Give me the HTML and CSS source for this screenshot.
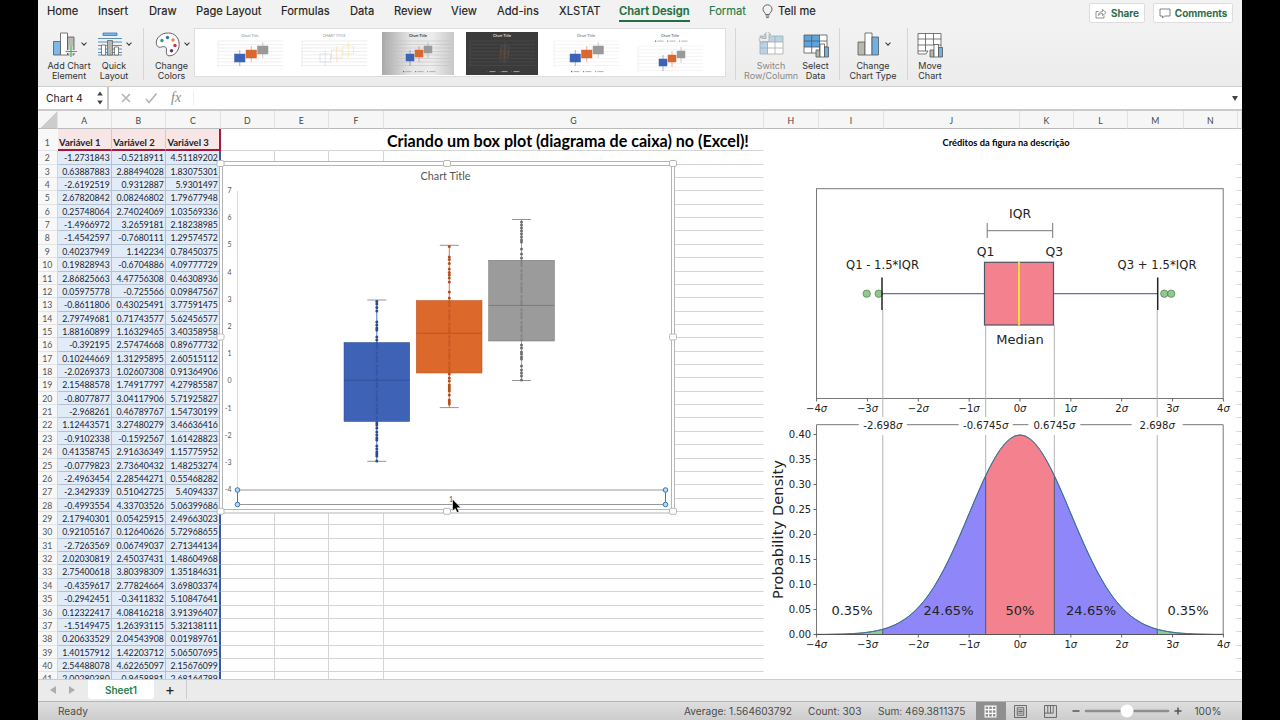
FILE: index.html
```
<!DOCTYPE html>
<html lang="pt-BR">
<head>
    <meta charset="UTF-8">
    <meta name="viewport" content="width=device-width, initial-scale=1.0">
    <title>Box plot - Excel</title>
    <link rel="stylesheet" href="styles.css">
</head>
<body>
<div class="app">
    <!-- ribbon tabs -->
    <div class="tabs">
        <span>Home</span><span>Insert</span><span>Draw</span><span>Page Layout</span><span>Formulas</span><span>Data</span><span>Review</span><span>View</span><span>Add-ins</span><span>XLSTAT</span><span class="active">Chart Design</span><span class="green">Format</span>
        <svg class="bulb" width="11" height="15" viewBox="0 0 11 15"><path d="M3.6 10.5C3.6 8.6 1 8 1 5.2a4.5 4.4 0 0 1 9 0C10 8 7.4 8.6 7.4 10.500zM3.700 12h3.600M4.200 13.600h2.600" fill="none" stroke="#555" stroke-width=".9"/></svg>
        <span>Tell me</span>
        <button class="share"><svg width="12" height="11" viewBox="0 0 12 11"><path d="M3.500 3.500H1v6.500h8V7.500M3.500 7.500C3.500 4.700 5.500 3.600 7.500 3.600V1.400L11 4.600 7.500 7.500V5.500C5.800 5.500 4.500 6 3.500 7.500z" fill="none" stroke="#666" stroke-width=".7"/></svg>Share</button>
        <button class="comments"><svg width="12" height="11" viewBox="0 0 12 11"><path d="M1 1h10v7H5.500L3.500 10V8H1z" fill="none" stroke="#666" stroke-width=".8"/></svg>Comments</button>
    </div>

    <!-- ribbon tools -->
    <div class="ribbon">
        <div class="tool add">
            <div class="icon"><svg width="26" height="26" viewBox="0 0 26 26"><g stroke="#555" stroke-width=".8"><path d="M1.500 9.500h7V23h-7z" fill="#7db9e6"/><path d="M8.500 1h7v22h-7z" fill="#fff"/><path d="M15.500 5h6.500v18h-6.500z" fill="#b9b9b4"/></g><path d="M19 14v11M13.500 19.500h11.500" stroke="#efefef" stroke-width="3"/><path d="M19 14v11M13.500 19.500h11.500" stroke="#3eae54" stroke-width="1.200"/></svg><i class="chev"></i></div>
            Add Chart<br>Element
        </div>
        <div class="tool quick">
            <div class="icon"><svg width="26" height="26" viewBox="0 0 26 26"><path d="M6 1h14v2.500H6z" fill="#7db9e6" stroke="#3a78ad" stroke-width=".8"/><path d="M1 6.500h24M1 10h24M1 13.500h24M1 17h24M1 20.500h24M1 23h24" stroke="#4588b8" stroke-width=".9"/><g stroke="#666" stroke-width=".8"><path d="M4.500 13h4v10h-4zM17.500 15h4v8h-4z" fill="#fff"/><path d="M10.500 8.500h5V23h-5z" fill="#b5b5b0"/></g></svg><i class="chev"></i></div>
            Quick<br>Layout
        </div>
        <div class="sep"></div>
        <div class="tool colors">
            <div class="icon"><svg width="26" height="26" viewBox="0 0 26 26"><path d="M13.500 1C6 .8 1 6 1.300 11c.2 3.800 3 4.800 5.200 4 2.400-.9 5.300-.5 5 3-.2 2.600-.4 5.500 2.500 5.800 5.200.4 10.200-4.800 10.200-11.400C24.200 5.500 19.500 1.100 13.500 1z" fill="#fff" stroke="#555" stroke-width=".9"/><circle cx="7" cy="8.500" r="1.700" fill="#2b9c8c"/><circle cx="12.500" cy="5.500" r="1.700" fill="#3f6fa8"/><circle cx="18" cy="8" r="1.700" fill="#e38a3b"/><circle cx="20" cy="13.500" r="1.700" fill="#c8344c"/><circle cx="16.500" cy="18.800" r="1.700" fill="#6b2d6f"/></svg><i class="chev"></i></div>
            Change<br>Colors
        </div>
        <div class="gallery" id="gallery"></div>
        <div class="sep"></div>
        <div class="tool switch">
            <div class="icon"><svg width="26" height="26" viewBox="0 0 26 26"><path d="M2 4h23v18H2z" fill="#fff"/><path d="M2 4h23v6H2zM2 10h8v12H2z" fill="#b8d4ea"/><path d="M2 4h23v18H2zM2 10h23M2 16h23M9.500 4v18M17 4v18" fill="none" stroke="#aaa" stroke-width=".8"/><path d="M1 7.500l3-3v2h4v-4H6l3.500-3 3.500 3h-2v7H4v2z" fill="#eee" stroke="#aaa" stroke-width=".8"/></svg></div>
            Switch<br>Row/Column
        </div>
        <div class="tool select">
            <div class="icon"><svg width="26" height="26" viewBox="0 0 26 26"><path d="M1 3h23v18H1z" fill="#fff"/><path d="M1 3h15.500v12H1z" fill="#5ba5de"/><path d="M1 3h23v18H1zM1 9h23M1 15h23M8.700 3v18M16.500 3v18" fill="none" stroke="#555" stroke-width=".8"/><g stroke="#555" stroke-width=".8"><path d="M13 18h4v7h-4z" fill="#b5b5b0"/><path d="M17 12h4.500v13H17z" fill="#fff"/><path d="M21.500 15h4v10h-4z" fill="#6fb1e2"/></g></svg></div>
            Select<br>Data
        </div>
        <div class="sep"></div>
        <div class="tool type">
            <div class="icon"><svg width="26" height="26" viewBox="0 0 26 26"><g stroke="#555" stroke-width=".8"><path d="M2 10h7v13H2z" fill="#b9b9b0"/><path d="M9 1h7v22H9z" fill="#fff"/><path d="M16 5h6.500v18H16z" fill="#6fb1e2"/></g></svg><i class="chev"></i></div>
            Change<br>Chart Type
        </div>
        <div class="sep"></div>
        <div class="tool move">
            <div class="icon"><svg width="26" height="26" viewBox="0 0 26 26"><path d="M1 1.500h23V19H14l-2 3.500H1z" fill="#fff"/><path d="M24 15V1.500H1v20.500h8l2-3H1M1 7h23M1 13h23M8.500 1.500V19M16.500 1.500V13" fill="none" stroke="#555" stroke-width=".8"/><g stroke="#555" stroke-width=".8"><path d="M13 18h4v7h-4z" fill="#b5b5b0"/><path d="M17 12.500h4.500V25H17z" fill="#fff"/><path d="M21.500 15.500h4V25h-4z" fill="#6fb1e2"/></g></svg></div>
            Move<br>Chart
        </div>
    </div>

    <!-- formula bar -->
    <div class="formula">
        <div class="name-box">Chart 4
            <svg width="6" height="14" viewBox="0 0 6 14"><path d="M3 .5L5.800 4.500H.2zM3 13.500L.2 9.500h5.600z" fill="#444"/></svg>
        </div>
        <svg class="fx-icons" width="44" height="16" viewBox="0 0 44 16"><path d="M5 4l8 8M13 4l-8 8M29 9l3 3.500 7.500-9" fill="none" stroke="#b4b4b4" stroke-width="1.600"/></svg>
        <span class="fx">fx</span>
        <div class="formula-input"></div>
        <i class="tri"></i>
    </div>

    <!-- worksheet -->
    <div class="sheet">
        <div class="row head"><div class="corner"></div><div>A</div><div>B</div><div>C</div><div>D</div><div>E</div><div>F</div><div>G</div><div>H</div><div>I</div><div>J</div><div>K</div><div>L</div><div>M</div><div>N</div><div></div></div>
        <div id="rows"></div>

        <div class="figure">
            <div class="credits">Créditos da figura na descrição</div>
            <svg id="figure" width="472" height="527" viewBox="764 152 472 527"></svg>
        </div>
        <svg class="chart" id="chart" width="462" height="360" viewBox="216 158 462 360"></svg>
    </div>

    <!-- sheet tabs -->
    <div class="sheet-tabs">
        <svg width="28" height="10" viewBox="0 0 28 10"><path d="M6 1v8L0 5zM19 1v8l6-4z" fill="#adadad"/></svg>
        <div class="sheet-tab">Sheet1</div>
        <div class="plus">+</div>
    </div>

    <div class="status">
        <span class="ready">Ready</span>
        <span class="avg">Average: 1.564603792</span>
        <span class="count">Count: 303</span>
        <span class="sum">Sum: 469.3811375</span>
        <div class="view on"><svg width="13" height="13" viewBox="0 0 12 12"><path d="M1 1h10v10H1zM1 4.300h10M1 7.700h10M4.300 1v10M7.700 1v10" fill="none" stroke="#fff"/></svg></div>
        <div class="view"><svg width="13" height="13" viewBox="0 0 12 12"><path d="M.5.5h11v11H.5zM3 2.500h6v7H3zM4 4.500h4M4 6h4M4 7.500h4" fill="none" stroke="#666" stroke-width=".9"/></svg></div>
        <div class="view"><svg width="13" height="13" viewBox="0 0 12 12"><path d="M.5.5h11v11H.5zM3.500.5v7h5v-7M6 .5v7M.5 7.500h3" fill="none" stroke="#666" stroke-width=".9"/></svg></div>
        <svg class="zoom" width="112" height="14" viewBox="0 0 112 14"><path d="M1.500 7h7M103.500 7h7M107 3.500v7" stroke="#555" stroke-width="1.500"/><path d="M15 7h82" stroke="#8e8e8e" stroke-width="2.500" stroke-linecap="round"/><circle cx="56" cy="7" r="6.500" fill="#fff"/></svg>
        <span class="pct">100%</span>
    </div>
</div>

<script>
    const data = `-1.2731843 -0.5218911 4.51189202
0.63887883 2.88494028 1.83075301
-2.6192519 0.9312887 5.9301497
2.67820842 0.08246802 1.79677948
0.25748064 2.74024069 1.03569336
-1.4966972 3.2659181 2.18238985
-1.4542597 -0.7680111 1.29574572
0.40237949 1.142234 0.78450375
0.19828943 -0.6704886 4.09777729
2.86825663 4.47756308 0.46308936
0.05975778 -0.725566 0.09847567
-0.8611806 0.43025491 3.77591475
2.79749681 0.71743577 5.62456577
1.88160899 1.16329465 3.40358958
-0.392195 2.57474668 0.89677732
0.10244669 1.31295895 2.60515112
-2.0269373 1.02607308 0.91364906
2.15488578 1.74917797 4.27985587
-0.8077877 3.04117906 5.71925827
-2.968261 0.46789767 1.54730199
1.12443571 3.27480279 3.46636416
-0.9102338 -0.1592567 1.61428823
0.41358745 2.91636349 1.15775952
-0.0779823 2.73640432 1.48253274
-2.4963454 2.28544271 0.55468282
-2.3429339 0.51042725 5.4094337
-0.4993554 4.33703526 5.06399686
2.17940301 0.05425915 2.49663023
0.92105167 0.12640626 5.72968655
-2.7263569 0.06749037 2.71344134
2.02030819 2.45037431 1.48604968
2.75400618 3.80398309 1.35184631
-0.4359617 2.77824664 3.69803374
-0.2942451 -0.3411832 5.10847641
0.12322417 4.08416218 3.91396407
-1.5149475 1.26393115 5.32138111
0.20633529 2.04543908 0.01989761
1.40157912 1.42203712 5.06507695
2.54488078 4.62265097 2.15676099
2.00280380 -0.9458881 2.68164789`.split('\n').map(r => r.split(' '));

    // sheet rows
    const empty = '<div></div>'.repeat(12);
    let html = '<div class="row first"><div class="num">1</div><div class="var">Variável 1</div><div class="var">Variável 2</div><div class="var">Variável 3</div><div></div><div></div><div></div><div class="title">Criando um box plot (diagrama de caixa) no (Excel)!</div></div>';
    data.forEach((r, i) => {
        html += `<div class="row"><div class="num">${i + 2}</div>` + r.map(v => `<div class="val">${v}</div>`).join('') + empty + '</div>';
    });
    document.getElementById('rows').innerHTML = html;

    // style gallery thumbnails
    const thumbs = [
        ['#fff', '#e3e3e3', '#888', 0], ['#fff', '#dedede', '#999', 1], ['url(#silver)', '#bdbdbd', '#333', 0],
        ['#3b3b3b', '#505050', '#ddd', 2], ['#fff', '#e8e8e8', '#888', 0], ['#fff', '#e8e8e8', '#777', 3]
    ];
    document.getElementById('gallery').innerHTML = thumbs.map(([bg, grid, ink, kind], i) => {
        let s = `<svg width="72" height="43" viewBox="0 0 72 43"><defs><linearGradient id="silver"><stop offset="0" stop-color="#a8a8a8"/><stop offset=".4" stop-color="#e6e6e6"/><stop offset=".7" stop-color="#ececec"/><stop offset="1" stop-color="#c8c8c8"/></linearGradient></defs><rect width="72" height="43" fill="${bg}"/>`;
        s += `<text x="36" y="4.500" font-size="3.800" fill="${ink}" text-anchor="middle"${i > 1 ? ' font-weight="bold"' : ''}>${i == 1 ? 'CHART TITLE' : 'Chart Title'}</text>`;
        const top = kind == 3 ? 14 : 9;
        for (let y = top; y < 36 + (kind == 3 ? 4 : 0); y += 3.5) s += `<path d="M4 ${y}h65" stroke="${grid}" stroke-width=".5"/>`;
        s += `<path d="M4 ${top}v26" stroke="${grid}" stroke-width=".6"/>`;
        const dy = kind == 3 ? 5 : 0, c = kind == 1 ? ['#c3cbe0', '#f2cf9f', '#ecdd90'] : kind == 2 ? ['#44505c', '#744b35', '#5a5a5a'] : ['#3e62b4', '#d9672f', '#999'];
        const left = [20.5, 22, 24, 34, 20, 25][i], step = [11.5, 11.5, 9, 0.5, 11.5, 9][i], bw = step < 10 ? 8 : 10.5;
        [22, 18, 14].forEach((y, k) => {
            const x = left + step * k;
            s += `<path d="M${x + bw / 2} ${y - 4 + dy}v16" stroke="${c[k]}" stroke-width=".5"/><rect x="${x}" y="${y + dy}" width="${bw}" height="${bw < 10 ? 7 : 8}" fill="${kind == 1 || kind == 2 ? 'none' : c[k]}" stroke="${c[k]}" stroke-width=".5"/>`;
        });
        if (i > 1) {
            const ly = kind == 3 ? 8.5 : 39;
            [21, 33, 45].forEach((x, k) => s += `<rect x="${x}" y="${ly}" width="1.200" height="1.200" fill="${c[k]}"/><path d="M${x + 2.5} ${ly + .6}h6" stroke="#aaa" stroke-width=".9"/>`);
        }
        return s + '</svg>';
    }).join('');

    // excel box plot
    const line = (x1, y1, x2, y2, c, w = 1) => `<line x1="${x1}" y1="${y1}" x2="${x2}" y2="${y2}" stroke="${c}" stroke-width="${w}"/>`;
    const rect = (x, y, w, h, rest) => `<rect x="${x}" y="${y}" width="${w}" height="${h}" ${rest}/>`;
    let c = rect(219.5, 161.5, 455, 351.5, 'fill="#fff" stroke="#b5b5b5"') + rect(222.5, 165.5, 449, 344, 'fill="#fff" stroke="#b5b5b5"');
    c += '<text class="chart-title" x="445.500" y="180">Chart Title</text>' + line(237.5, 191, 237.5, 490, '#dcdcdc');
    for (let v = 7; v >= -4; v--) c += `<text class="axis" x="231.500" y="${193 + (7 - v) * 27.2}">${v}</text>`;
    const boxes = [
        {x: 344, cx: 376.8, q3: 342.5, q1: 421.5, med: 380.2, hi: 300, lo: 461.3, fill: '#3e63b6', dark: '#2b4a8c',
         dots: [301.5, 304, 307.5, 311, 322, 325, 328, 330, 337, 340, 423, 425, 428, 432, 435, 438, 440, 446, 449, 452, 454, 456, 461]},
        {x: 416.3, cx: 449.3, q3: 300.5, q1: 373, med: 333.3, hi: 245.3, lo: 407.6, fill: '#dc682c', dark: '#b54d18',
         dots: [246.5, 257, 259.5, 263.500, 269, 272.5, 275, 278, 282, 292, 298, 374, 378, 381, 385, 387, 389, 391, 395, 400, 402, 404]},
        {x: 488.7, cx: 521.5, q3: 260.3, q1: 341, med: 305.4, hi: 219.5, lo: 380.5, fill: '#9b9b9b', dark: '#6e6e6e',
         dots: [222, 225, 228, 231, 234, 237, 240, 242, 249, 254, 258, 345, 348, 352, 354, 357, 359, 366, 370, 373, 376, 380]}
    ];
    for (const b of boxes) {
        c += line(b.cx, b.hi, b.cx, b.lo, b.fill, .9) + line(b.cx - 9.5, b.hi, b.cx + 9.5, b.hi, '#888', .9) + line(b.cx - 9.5, b.lo, b.cx + 9.5, b.lo, '#888', .9);
        c += rect(b.x, b.q3, 65.7, b.q1 - b.q3, `fill="${b.fill}" stroke="${b.dark}" stroke-width=".5"`);
        c += line(b.x, b.med, b.x + 65.7, b.med, b.dark, .7);
        c += `<line x1="${b.cx}" y1="${b.q3}" x2="${b.cx}" y2="${b.q1}" stroke="${b.dark}" stroke-width="2" stroke-dasharray="7 2 3 1" opacity=".5"/>`;
        c += b.dots.map(y => `<circle cx="${b.cx}" cy="${y}" r="1.500" fill="${b.dark}"/>`).join('');
    }
    c += rect(237.5, 490, 428, 14.5, 'fill="none" stroke="#999"') + '<text class="axis" x="453" y="502">1</text>';
    for (const x of [237.5, 665.5]) c += line(x, 490, x, 504.5, '#3b7db8') + [490, 504.5].map(y => `<circle cx="${x}" cy="${y}" r="2.300" fill="#b7d8f0" stroke="#2f7cba"/>`).join('');
    for (const [x, y] of [[220.5, 163.5], [447, 163.5], [673, 163.5], [220.5, 337], [673, 337], [220.5, 511.3], [447, 511.3], [673, 511.3]])
        c += rect(x - 3.5, y - 3, 7, 6, 'rx="1.500" fill="#fff" stroke="#b0b0b0" stroke-width=".9"');
    c += '<path d="M452.500 499v12l2.700-2.400 1.800 4 2-.9-1.800-3.900h3.600z" fill="#000" stroke="#fff" stroke-width=".6"/>';
    document.getElementById('chart').innerHTML = c;

    // box plot against the normal distribution
    const X = s => 1020 + s * 50.85;
    const Y = s => 634.5 - 500 * Math.exp(-s * s / 2) / Math.sqrt(2 * Math.PI);
    const curve = (a, b) => {
        let p = [];
        for (let i = 0; i <= 80; i++) { const s = a + (b - a) * i / 80; p.push(X(s).toFixed(1) + ',' + Y(s).toFixed(1)); }
        return p.join(' ');
    };
    const area = (a, b, col) => `<polygon points="${X(a)},634.500 ${curve(a, b)} ${X(b)},634.500" fill="${col}" stroke="#33566b" stroke-width=".7"/>`;
    const text = (x, y, t, size, len) => `<text x="${x}" y="${y}" font-size="${size}" text-anchor="middle"${len ? ` textLength="${len}"` : ''}>${t}</text>`;
    const sig = '<tspan font-style="italic">σ</tspan>';
    const q = .6745, w = 2.698;
    let f = rect(816.5, 188.7, 406.7, 209.8, 'fill="none" stroke="#777"');
    f += '<path d="M816.500 634.500V424.700H1223.200V634.500" fill="none" stroke="#777"/>';
    for (const s of [-w, -q, q, w]) f += line(X(s), Math.abs(s) > 1 ? 310 : 325, X(s), 417, '#aaa', .9) + line(X(s), 435, X(s), 634, '#aaa', .9);
    f += area(-4, -w, '#8fca94') + area(w, 4, '#8fca94') + area(-w, -q, '#8f86fa') + area(q, w, '#8f86fa') + area(-q, q, '#f3828e');
    f += `<polyline points="${curve(-4, 4)}" fill="none" stroke="#39729b"/>` + line(816.5, 634.5, 1223.2, 634.5, '#555');
    for (const [s, t, bw] of [[-w, '-2.698', 48], [-q, '-0.6745', 54], [q, '0.6745', 52], [w, '2.698', 51]])
        f += rect(X(s) - bw / 2, 418, bw, 15, 'fill="#fff"') + text(X(s), 429.2, t + sig, 10.1);
    for (let s = -4; s <= 4; s++) {
        f += line(X(s), 398.5, X(s), 401.5, '#555', .9) + line(X(s), 634.5, X(s), 637.500, '#555', .9);
        const t = (s < 0 ? '−' : '') + Math.abs(s) + sig;
        f += text(X(s), 411.7, t, 10) + text(X(s), 647.8, t, 10);
    }
    for (let i = 0; i <= 8; i++) f += line(813.5, 634.5 - i * 25, 816.5, 634.5 - i * 25, '#555', .9) + text(800, 638.2 - i * 25, (i * .05).toFixed(2), 10);
    f += '<text class="ylabel" transform="translate(782.500 529.500) rotate(-90)" text-anchor="middle" font-size="14.600" textLength="139">Probability Density</text>';
    f += text(1020, 217.8, 'IQR', 12.4) + text(985.5, 255.800, 'Q1', 12.4) + text(1054.300, 255.800, 'Q3', 12.4) + text(882.5, 268.600, 'Q1 - 1.5*IQR', 11.6, 73) + text(1157, 268.600, 'Q3 + 1.5*IQR', 11.6, 79) + text(1020, 344, 'Median', 13);
    f += text(852, 614.500, '0.35%', 13, 41) + text(948.5, 614.500, '24.65%', 13, 50) + text(1020, 614.500, '50%', 13) + text(1091, 614.500, '24.65%', 13, 50) + text(1188, 614.500, '0.35%', 13, 41);
    f += '<path d="M987.200 223v15M1052.700 223v15M987.200 230.700h65.500" stroke="#777" fill="none"/>';
    f += line(882, 293.7, 985, 293.7, '#6a69c0', 1.2) + line(1054, 293.7, 1157, 293.7, '#6a69c0', 1.2);
    f += rect(984.5, 262.3, 69, 62.7, 'fill="#f3828e" stroke="#4b5568" stroke-width="1.200"') + line(1019, 262, 1019, 325.5, '#f3dc3c', 2);
    f += [866.7, 878.7, 1164.3, 1171.2].map(x => `<circle cx="${x}" cy="293.700" r="3.700" fill="#6cb56a" fill-opacity=".75" stroke="#4e7d4e" stroke-width=".7"/>`).join('');
    f += line(882, 277.5, 882, 310, '#222', 1.5) + line(1157.7, 277.5, 1157.7, 310, '#222', 1.5);
    document.getElementById('figure').innerHTML = f;
</script>
</body>
</html>
```
FILE: styles.css
```
* {
    box-sizing: border-box;
}
body {
    margin: 0;
    padding: 0 38px;
    height: 720px;
    overflow: hidden;
    background: #000;
    font-family: Inter, sans-serif;
    color: #222;
}
.app {
    width: 1204px;
    height: 720px;
    display: flex;
    flex-direction: column;
    background: #fff;
    overflow: hidden;
}
/* ribbon */
.tabs {
    flex: none;
    height: 26px;
    display: grid;
    grid-template-columns: 51px 51px 47px 85px 69px 44px 57px 46px 62px 60px 90px 53px 16px 311px 85px 80px;
    padding-left: 9px;
    background: #f2f2f2;
    font-size: 11.2px;
    line-height: 23px;
    white-space: nowrap;
    -webkit-text-stroke: .15px;
}
.tabs .green {
    color: #2b7a45;
}
.tabs .active {
    color: #1f7040;
    font-weight: 600;
    justify-self: start;
    height: 22px;
    border-bottom: 2px solid #1f7040;
}
.bulb {
    margin-top: 4px;
}
.tabs button {
    height: 20px;
    margin-top: 3px;
    padding: 0;
    display: flex;
    align-items: center;
    justify-content: center;
    gap: 4px;
    font: 600 10px Inter, sans-serif;
    color: #27693f;
    background: #fff;
    border: 1px solid #ddd;
    border-radius: 2px;
}
.share {
    width: 56px;
}
.tabs .comments {
    width: 80px;
    margin-left: -21px;
}
.ribbon {
    flex: none;
    height: 61px;
    display: flex;
    padding: 2px 0 0 8px;
    background: linear-gradient(#f2f2f2, #ececec);
    border-bottom: 1px solid #cfcfcf;
}
.tool {
    flex: none;
    padding-top: 4px;
    font-size: 9px;
    line-height: 10px;
    text-align: center;
    white-space: nowrap;
    color: #333;
}
.icon {
    height: 29px;
    display: flex;
    justify-content: center;
    gap: 4px;
}
.chev {
    width: 4px;
    height: 4px;
    margin-top: 9px;
    border: solid #333;
    border-width: 0 1px 1px 0;
    transform: rotate(45deg);
}
.add { width: 46px; }
.quick { width: 44px; }
.colors { width: 41px; margin-left: 7px; }
.switch { width: 54px; margin-left: 8px; color: #888; }
.select { width: 35px; }
.type { width: 52px; margin-left: 7px; }
.move { width: 36px; margin-left: 4px; }
.sep {
    flex: none;
    width: 1px;
    height: 52px;
    background: #d6d6d6;
}
.quick + .sep { margin-left: 7px; }
.gallery + .sep { margin-left: 9px; }
.select + .sep { margin-left: 6px; }
.type + .sep { margin-left: 8px; }
.gallery {
    flex: none;
    width: 532px;
    height: 49px;
    margin-left: 2px;
    padding: 3px 0 0 19px;
    display: flex;
    gap: 12px;
    background: #fff;
    border: 1px solid #dedede;
}
.gallery svg {
    flex: none;
}
.gallery text {
    font-family: Lato, sans-serif;
}
/* formula bar */
.formula {
    flex: none;
    height: 24px;
    display: flex;
    align-items: center;
    border-bottom: 2px solid #cbcbcb;
}
.name-box {
    width: 71px;
    height: 22px;
    display: flex;
    align-items: center;
    justify-content: space-between;
    padding: 0 4px 0 8px;
    font-size: 10.400px;
    border-right: 2px solid #c8c8c8;
}
.fx-icons {
    margin-left: 8px;
}
.fx {
    width: 22px;
    margin-left: 10px;
    font: italic 14px "Liberation Serif", serif;
    color: #8a8a8a;
}
.formula-input {
    flex: 1;
    height: 14px;
    border-left: 1px solid #eee;
}
.tri {
    margin-right: 4px;
    border: 3px solid transparent;
    border-top: 5px solid #444;
    border-bottom: 0;
}
/* worksheet */
.sheet {
    flex: none;
    position: relative;
    height: 568px;
    overflow: hidden;
    font-family: Lato, sans-serif;
}
.row {
    display: grid;
    grid-template-columns: 19.500px 54.200px 54.200px 55px 54px 54px 55px 380px 55px 65px 136px 54px 54px 56px 54px 4px;
    grid-template-rows: 100%;
    height: 13.37px;
    font-size: 8.700px;
    line-height: 14px;
}
.row > div {
    border-right: 1px solid #d4d4d4;
    border-bottom: 1px solid #d4d4d4;
}
.row > div:nth-child(n + 8) {
    border-right-color: transparent;
}
.row.head {
    height: 18px;
    line-height: 19px;
    text-align: center;
    color: #444;
    background: #f6f6f6;
}
.row.head > div {
    border-right-color: #e2e2e2;
    border-bottom-color: #bbb;
}
.row .corner {
    background: linear-gradient(135deg, transparent 55%, #ccc 55%);
}
.row .num {
    text-align: center;
    color: #555;
    background: #f8f8f8;
    border-bottom-color: #e4e4e4;
}
.row .val {
    padding-right: 1px;
    text-align: right;
    color: #1a222c;
    background: #e1ecf8;
    border-color: #b3c2d3;
}
.row .val:nth-child(4) {
    border-right: 2px solid #3a5a9c;
}
.row.first {
    height: 22.3px;
    line-height: 28px;
}
.row.first > div {
    border-right-color: transparent;
}
.row.first .var {
    padding-left: 1.500px;
    font-size: 9.500px;
    font-weight: bold;
    color: #222;
    background: #f8e5e6;
    border-right-color: #dcc5c8;
    border-bottom: 2px solid #a3193d;
}
.row.first .var:nth-child(4) {
    border-right: 2px solid #a3193d;
}
.row.first .title {
    padding-left: 3px;
    font-size: 16.100px;
    font-weight: bold;
    line-height: 24px;
    white-space: nowrap;
    color: #000;
}
/* pictures floating above the cells */
.figure {
    position: absolute;
    left: 726px;
    top: 18px;
    width: 472px;
    height: 550px;
    background: #fff;
}
.figure svg {
    display: block;
    font-family: "DejaVu Sans", sans-serif;
    fill: #222;
}
.credits {
    height: 23px;
    padding-left: 12px;
    font-size: 9.300px;
    font-weight: bold;
    line-height: 28px;
    text-align: center;
    color: #000;
}
.chart {
    position: absolute;
    left: 178px;
    top: 47px;
}
.chart-title {
    font-size: 10.800px;
    text-anchor: middle;
    fill: #555;
}
.axis {
    font-size: 7px;
    text-anchor: end;
    fill: #555;
}
/* bottom bars */
.sheet-tabs {
    flex: none;
    height: 22px;
    display: flex;
    background: #ebebeb;
    border-top: 1px solid #ccc;
}
.sheet-tabs svg {
    margin: 5px 0 0 12px;
}
.sheet-tab {
    width: 66px;
    height: 19px;
    margin-left: 10px;
    font-size: 10px;
    font-weight: 600;
    line-height: 20px;
    text-align: center;
    color: #278046;
    background: #fff;
    border-radius: 0 0 3px 3px;
}
.plus {
    width: 33px;
    height: 19px;
    font-size: 15px;
    line-height: 19px;
    text-align: center;
    border-right: 1px solid #ccc;
}
.status {
    flex: none;
    height: 19px;
    display: flex;
    align-items: center;
    background: linear-gradient(#dedede, #cdcdcd);
    border-top: 1px solid #b5b5b5;
    font-size: 10.150px;
    white-space: nowrap;
    color: #4c4c4c;
}
.ready {
    width: 646px;
    padding-left: 20px;
}
.avg { width: 124px; }
.count { width: 70px; }
.sum { width: 97.500px; }
.view {
    width: 30px;
    height: 18px;
    display: flex;
    align-items: center;
    justify-content: center;
}
.view.on {
    background: #8f8f8f;
}
.zoom {
    margin-left: 5px;
}
.pct {
    margin-left: 12px;
}
```
